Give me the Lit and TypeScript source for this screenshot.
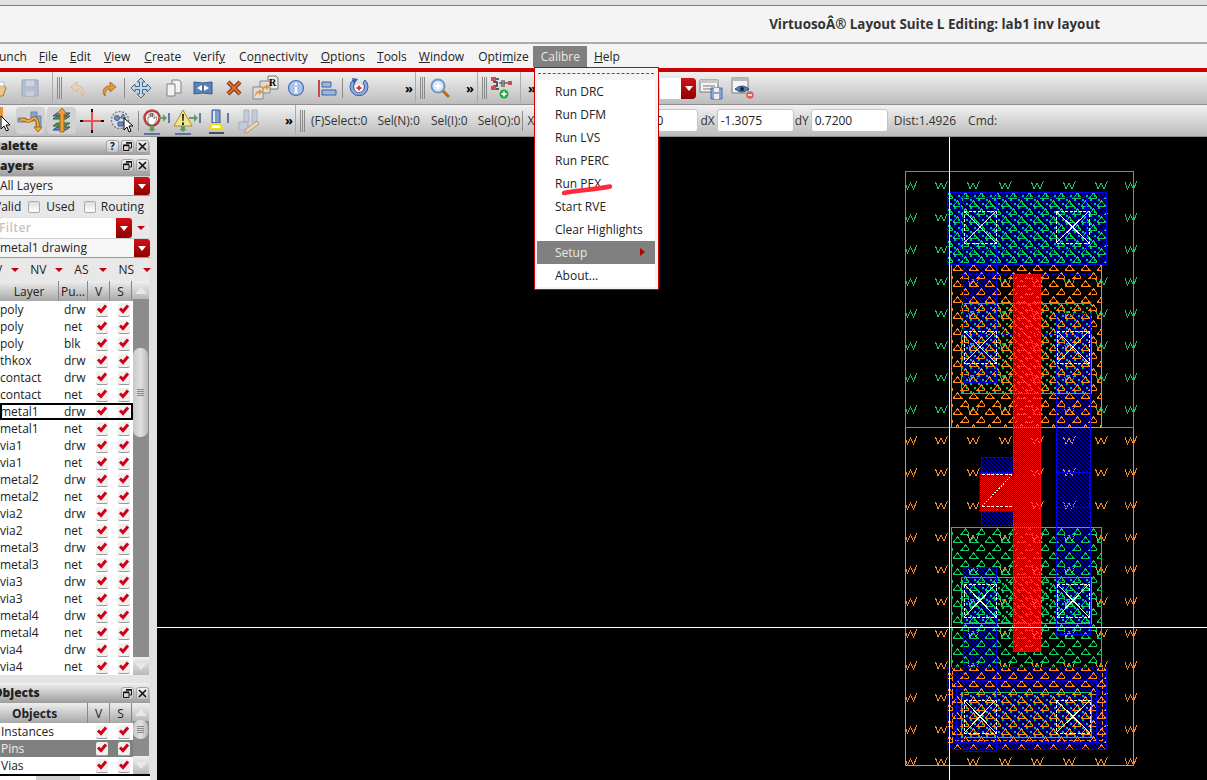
import { LitElement, html, css, svg } from "lit";
import { customElement } from "lit/decorators.js";

const ic = (c: unknown, w = 30) => html`<svg class="ic" width=${w} height="28" viewBox="0 0 ${w} 28">${c}</svg>`;
const folder = svg`<path d="M6 11h14l2 3-3 8H6z" fill="#e9c88a" stroke="#a07a3a"/><path d="M15 8l5 0 0 4-5 0z" fill="#fff" stroke="#bbb"/>`;
const save = svg`<path d="M7 6h16v16H7z" fill="#b5bfd4" stroke="#98a3b8"/><path d="M10 6h10v7H10z" fill="#cdd4e2" stroke="#a8b0c4"/><path d="M11 17h8v5h-8z" fill="#c8ccd4"/>`;
const undo = svg`<path d="M19 22c4-5 1-10-5-10V8l-6 5 6 5v-3c3 0 5 2 5 7z" fill="#ecd3b8" stroke="#d2b89c"/>`;
const redo = svg`<path d="M11 22c-4-5-1-10 5-10V8l6 5-6 5v-3c-3 0-5 2-5 7z" fill="#e8963e" stroke="#b06a28"/>`;
const move = svg`<path d="M15 4l4 4h-2.500v4.500H21V10l4 4-4 4v-2.500h-4.500V20H19l-4 4-4-4h2.500v-4.500H9V18l-4-4 4-4v2.500h4.500V8H11z" fill="#c4d8ec" stroke="#41678f"/>`;
const copy = svg`<path d="M15 6h7l2 2v11h-9z" fill="#f2f2f2" stroke="#808080"/><path d="M10 10h8v12h-8z" fill="#f2f2f2" stroke="#808080"/>`;
const stretch = svg`<path d="M6 8q9 2 18 0v12q-9-2-18 0z" fill="#5c83b8" stroke="#38598c"/><path d="M14 11l-5 3 5 3zM16 11l5 3-5 3z" fill="#fff"/><path d="M15 10v8" stroke="#38598c"/>`;
const del = svg`<path d="M9 8l12 12M21 8L9 20" stroke="#7a3410" stroke-width="4.200"/><path d="M9 8l12 12M21 8L9 20" stroke="#e0702c" stroke-width="2"/>`;
const rIcon = svg`<path d="M18 2h8l2 2v11h-10z" fill="#eee" stroke="#777"/><path d="M10 7h10v12h-10z" fill="#ddd" stroke="#888"/><path d="M3 13h10v12h-10z" fill="#ddd" stroke="#888"/><path d="M5 23c0-4 1-6 4-6v-2l4 3-4 3v-2c-2 0-3 2-4 4zM12 17c0-3 1-5 4-5v-2l4 3-4 3v-2c-2 0-3 1-4 3z" fill="#e8963e"/><text x="19" y="12" font-family="Liberation Serif" font-weight="700" font-size="10" fill="#000">R</text>`;
const info = svg`<circle cx="15" cy="14" r="7.500" fill="#a9c3ea" stroke="#4a6cb0" stroke-width="1.200"/><circle cx="15" cy="10" r="1.300" fill="#fff"/><path d="M13.500 12.500h2.500V18h1v1h-4v-1h1v-4.500h-.5z" fill="#fff"/>`;
const align = svg`<path d="M7 6v17" stroke="#c44848" stroke-width="2"/><path d="M10 8h9v5h-9zM10 16h14v5H10z" fill="#9cb6dc" stroke="#3a62a8"/>`;
const reload = svg`<path d="M9 6a9 9 0 1 0 12 0l-2 3a5.500 5.500 0 1 1-8 0z" fill="#8aa8dc" stroke="#3a5ea4"/><path d="M8 4l6 1-4 5z" fill="#3a5ea4"/><circle cx="15" cy="14" r="4" fill="#fff"/><path d="M15 11.500v5M12.500 14h5" stroke="#e03030" stroke-width="1.800"/>`;
const zoomI = svg`<path d="M16 16l7 7" stroke="#b86c1c" stroke-width="3"/><circle cx="12" cy="12" r="6.500" fill="#d8e8f8" stroke="#6f95c4" stroke-width="2"/><path d="M12 9v6M9 12h6" stroke="#fff" stroke-width="2"/>`;
const comp = svg`<path d="M11 5H6v3h3v4H6v3h5" fill="none" stroke="#333" stroke-width="1.500"/><path d="M11 9h3M14 6v7M16 6v7M16 9h5" fill="none" stroke="#333"/><path d="M3 3h5v4H3zM3 12h5v4H3zM20 7h4v4h-4z" fill="#c85050"/><circle cx="16" cy="20" r="4.500" fill="#1fa83c"/><path d="M16 17.500v5M13.500 20h5" stroke="#fff" stroke-width="1.800"/>`;
const winSave = svg`<path d="M4 6h18v12H4z" fill="#f4f4f4" stroke="#777"/><path d="M4 6h18v3H4z" fill="#c8c8c8"/><path d="M7 12h12M7 15h8" stroke="#777"/><path d="M15 14h11v11H15z" fill="#8aa4d8" stroke="#4a6aa4"/><path d="M18 14h5v4h-5zM18 20h5v5h-5z" fill="#eee"/>`;
const winEye = svg`<path d="M5 4h16v15H5z" fill="#f4f4f4" stroke="#777"/><path d="M5 4h16v3H5z" fill="#b8b8b8"/><path d="M8 15q7-6 14 0-7 6-14 0z" fill="#5c7cb0" stroke="#2c4a80"/><circle cx="15" cy="15" r="2" fill="#223"/><circle cx="23" cy="21" r="3.800" fill="#e06060"/><path d="M21 21h4" stroke="#fff" stroke-width="1.500"/>`;
const curPre = svg`<path d="M10 0h5v10h-5z" fill="#e8963e"/><path d="M13 9v13l3-3 2.500 5 2-1-2.500-5h4z" fill="#fff" stroke="#000"/>`;
const route = svg`<path d="M2 11h8v4H2zM15 5h6v9h-6zM20 9h5v11h-5z" fill="#88a4cc" stroke="#6484b0"/><path d="M4 14c4-5 7 3 11-1s6-1 7 4v3" fill="none" stroke="#a06814" stroke-width="3.600"/><path d="M4 14c4-5 7 3 11-1s6-1 7 4v3" fill="none" stroke="#f0b040" stroke-width="1.800"/><path d="M18 20h8l-4 5z" fill="#f0b040" stroke="#a06814"/>`;
const layers = svg`<path d="M6 12l4-3h13l-4 3zM6 19l4-3h13l-4 3z" fill="#4a9a50" stroke="#2a6a30"/><path d="M6 23l4-3h13l-4 3z" fill="#6484c0" stroke="#2a4a90"/><path d="M6 9l4-3h13l-4 3z" fill="#6484c0" stroke="#2a4a90"/><path d="M15 1l-5 6h3v18h4V7h3z" fill="#f0a030" stroke="#a06814"/>`;
const cross = svg`<path d="M15 3v22M4 14h22" stroke="#e85050" stroke-width="2"/><path d="M15 2v3M15 23v3M3 14h3M24 14h3" stroke="#111" stroke-width="2"/>`;
const selectI = svg`<circle cx="12" cy="13" r="8.500" fill="#ddd" stroke="#777" stroke-dasharray="2 1.500" stroke-width="1.300"/><circle cx="9" cy="11" r="2.500" fill="#6d8fc4" stroke="#3c5a90"/><path d="M15 7l2.500 4h-5z" fill="#8aa4cc" stroke="#3c5a90"/><path d="M10 15h5v4h-5z" fill="#6d8fc4" stroke="#3c5a90"/><path d="M16 11v12l3-3 2 5 2-1-2-5h4z" fill="#fff" stroke="#000"/>`;
const hand = svg`<circle cx="13" cy="11" r="7.500" fill="#f0f0f0" stroke="#b83c3c" stroke-width="2.500"/><path d="M9 10v5q1 3 4 3t4-4l1-4h-2l-1 2V7h-1.500v3V6H13v4V6h-1.500v4V7H10v4z" fill="#fff" stroke="#555" stroke-width=".6"/><path d="M20 10h4V7l4 4-4 4v-3h-4z" fill="#5da060"/><path d="M11 19h4v3h2l-4 3-4-3h2z" fill="#5da060"/><path d="M5 27h16" stroke="#3c5a90" stroke-width="1.500"/><path d="M30 6v10" stroke="#3c5a90" stroke-width="1.500"/>`;
const warnI = svg`<path d="M13 3l9 16H4z" fill="#f4e68c" stroke="#b09030"/><path d="M12 7h2l-.4 7h-1.200zM12 15.500h2V18h-2z" fill="#222"/><path d="M19 10h5V7l4 4-4 4v-3h-5z" fill="#5da060"/><path d="M11 19h4v3h2l-4 3-4-3h2z" fill="#5da060"/><path d="M5 27h16" stroke="#3c5a90" stroke-width="1.500"/><path d="M30 6v10" stroke="#3c5a90" stroke-width="1.500"/>`;
const yellowI = svg`<path d="M11 3h8v13h-8z" fill="#7c9cd0" stroke="#3c5a90"/><path d="M12 4h2v11h-2z" fill="#dfe8f6"/><path d="M11 17h8l2 5H9z" fill="#fff" stroke="#f0e000" stroke-width="2"/><path d="M8 26h15" stroke="#222244" stroke-width="1.500"/><path d="M27 6v10" stroke="#3c5a90" stroke-width="1.500"/>`;
const disI = svg`<path d="M6 15h9v8H6zM11 3h5v12h-5zM19 3h5v12h-5z" fill="#c4cbd8" stroke="#a8b0c0"/><path d="M11 26l2-4 11-8 2 3-11 8z" fill="#e8d8b8" stroke="#b09880"/>`;

const wbFloat = svg`<svg width="9" height="9" viewBox="0 0 9 9"><path d="M3 .5h5.500V6H6.500M.5 3H6v5.500H.5z" fill="none" stroke="#111"/><path d="M3 1h5.500M.5 3.500H6" stroke="#111" stroke-width="1.500"/></svg>`;
const wbClose = svg`<svg width="9" height="9" viewBox="0 0 9 9"><path d="M1 1l7 7M8 1l-7 7" stroke="#111" stroke-width="1.600"/></svg>`;

const rows: [string, string, boolean?][] = [
  ["poly", "drw"], ["poly", "net"], ["poly", "blk"], ["thkox", "drw"], ["contact", "drw"], ["contact", "net"],
  ["metal1", "drw", true], ["metal1", "net"], ["via1", "drw"], ["via1", "net"], ["metal2", "drw"], ["metal2", "net"],
  ["via2", "drw"], ["via2", "net"], ["metal3", "drw"], ["metal3", "net"], ["via3", "drw"], ["via3", "net"],
  ["metal4", "drw"], ["metal4", "net"], ["via4", "drw"], ["via4", "net"],
];
const check = html`<span class="cb"><svg width="12" height="12" viewBox="0 0 12 12"><path d="M2 5.500l3 3 5-6" fill="none" stroke="#d00018" stroke-width="3"/></svg></span>`;
const arrow = html`<span class="carr"></span>`;

const menuItems = ["Run DRC", "Run DFM", "Run LVS", "Run PERC", "Run PEX", "Start RVE", "Clear Highlights", "Setup", "About..."];

const wx = [911, 941.5, 973.5, 1005.5, 1037.5, 1069.5, 1101.5, 1131];
const wyGreen = [185, 217, 249, 281, 313, 345, 377, 409];
const wyOrange = [440, 472, 505, 537, 569, 601, 633, 665, 697, 729, 761];
const wMark = (x: number, y: number, c: string) =>
  svg`<path d="M${x - 6} ${y - 3}l2.500 7 3-6 3 6 3.500-8" fill="none" stroke=${c}/>`;
const cutX = (x: number, y: number, w: number, h: number) => svg`
  <rect x=${x} y=${y} width=${w} height=${h} fill="none" stroke="#fff" stroke-dasharray="3 1.500"/>
  <path d="M${x} ${y}L${x + w} ${y + h}M${x + w} ${y}L${x} ${y + h}" stroke="#fff"/>`;
const hatch = (x: number, y: number, w: number, h: number) =>
  svg`<rect x=${x} y=${y} width=${w} height=${h} fill="url(#bh)"/>`;
const thin = (x: number, y: number, w: number, h: number, c: string, extra = "") =>
  svg`<rect x=${x} y=${y} width=${w} height=${h} fill="none" stroke=${c} stroke-dasharray=${extra || "none"}/>`;

interface MenuEntry { pre: string; key: string; post: string; shift: number; }
const mb: MenuEntry[] = [
  { pre: "L", key: "a", post: "unch", shift: 0 },
  { pre: "", key: "F", post: "ile", shift: 0 },
  { pre: "", key: "E", post: "dit", shift: 0 },
  { pre: "", key: "V", post: "iew", shift: 1 },
  { pre: "", key: "C", post: "reate", shift: 2 },
  { pre: "Verif", key: "y", post: "", shift: 0 },
  { pre: "Co", key: "n", post: "nectivity", shift: 2 },
  { pre: "", key: "O", post: "ptions", shift: 1 },
  { pre: "", key: "T", post: "ools", shift: 0 },
  { pre: "", key: "W", post: "indow", shift: 0 },
  { pre: "Opti", key: "m", post: "ize", shift: 2 },
];

@customElement("app-root")
export class AppRoot extends LitElement {
  static styles = css`
    :host { display: block; width: 1207px; height: 780px; overflow: hidden; position: relative; font-family: "Open Sans", "Noto Sans", sans-serif; font-size: 12px; color: #222; background: #e4e4e4; }
    .app { display: flex; flex-direction: column; height: 780px; }
    .strip { height: 5px; background: #e2e2e2; border-bottom: 1px solid #7c7c7c; }
    .title { height: 36px; display: flex; align-items: center; justify-content: flex-end; padding-right: 107px; background: #f4f4f4; font-size: 13.4px; font-weight: 700; color: #333; border-bottom: 2px solid #aaa; }
    .menubar { height: 24px; background: #f4f4f4; display: flex; align-items: center; margin-left: -20px; }
    .m { padding: 0 6px; height: 21px; line-height: 21px; margin-top: 0; white-space: nowrap; flex: none; }
    .m.on { background: #808080; color: #e8e8e8; padding: 0 7px 0 8px; margin-left: -2px; }
    .m.help { margin-left: 1px; }
    .redline { height: 4px; background: #cc0000; }
    .tb { display: flex; background: linear-gradient(#f1f1f1, #bcbcbc); border-bottom: 1px solid #8f8f8f; align-items: stretch; }
    .tb1 { height: 32px; }
    .tb2 { height: 31px; }
    .seg { display: flex; align-items: center; border-right: 1px solid #aaa; border-bottom-right-radius: 3px; flex: none; }
    .seg1 { margin-left: -17px; }
    .seg2 { width: 353px; }
    .seg3 { width: 52px; }
    .seg4 { width: 33px; }
    .seg5 { margin-left: -11px; width: 306px; }
    .pad7 { width: 7px; flex: none; }
    .slot { width: 31px; flex: none; display: flex; justify-content: center; overflow: visible; }
    .slot.narrow { width: 27px; }
    .slot.l { justify-content: flex-start; }
    .ic { display: block; flex: none; overflow: visible; }
    .handle { width: 5px; height: 22px; flex: none; box-sizing: border-box; border-left: 1px solid #8a8a8a; border-right: 1px solid #8a8a8a; margin: 5px 0 0 4px; position: relative; }
    .handle::after { content: ""; position: absolute; left: 1px; top: 0; width: 1px; height: 22px; background: #8a8a8a; }
    .sep { width: 1px; height: 20px; background: #8a8a8a; flex: none; }
    .chev { font-weight: 700; color: #000; font-size: 13px; flex: none; line-height: 1; align-self: center; }
    .c1 { margin-left: 31px; }
    .c2 { margin-left: 10px; }
    .c3 { margin-left: 7px; }
    .c4 { margin-left: 22px; }
    .sp { flex: none; width: 124px; }
    .active { background: #d2d2d2; border-radius: 4px; width: 29px; height: 27px; display: flex; justify-content: center; align-items: center; flex: none; }
    .active + .active { margin-left: 2px; }
    .stat { white-space: nowrap; flex: none; color: #333; }
    .stats { display: flex; align-items: center; flex: 1; margin-left: 6px; }
    .ml1 { margin-left: 10px; } .ml2 { margin-left: 11px; } .ml3 { margin-left: 10px; } .ml4 { margin-left: 2px; } .ml5 { margin-left: 4px; }
    .ml1b { margin-left: 2px; } .ml0 { margin-left: 1px; } .ml6 { margin-left: 6px; } .ml7 { margin-left: 12px; }
    .field { background: #fff; border: 1px solid #c4c4c4; border-radius: 3px; height: 23px; line-height: 21px; padding-left: 3px; box-sizing: border-box; flex: none; color: #222; }
    .field.w { width: 77px; }
    .field.x { margin-left: 94px; width: 70px; text-align: right; padding-right: 34px; }
    .combo { width: 36px; height: 21px; display: flex; flex: none; border-radius: 0 3px 3px 0; overflow: hidden; background: #fff; align-self: center; }
    .carrbox { width: 15px; margin-left: auto; background: linear-gradient(#d21018, #8c0000); display: flex; align-items: center; justify-content: center; border-radius: 0 3px 3px 0; flex: none; }
    .carr { display: block; width: 0; height: 0; border-left: 4px solid transparent; border-right: 4px solid transparent; border-top: 5px solid #fff; }
    .wins { display: flex; align-items: center; flex: none; gap: 1px; }
    .main { flex: 1; display: flex; min-height: 0; }
    .dock { width: 157px; flex: none; background: #e2e2e2; overflow: hidden; }
    .dtitle { height: 20px; display: flex; align-items: center; background: linear-gradient(#f2f2f2, #9c9c9c); font-weight: 700; width: 150px; box-sizing: border-box; }
    .dtitle.a { height: 18px; }
    .dtitle.b { height: 21px; }
    .dtitle b { flex: 1; white-space: nowrap; margin-left: -7px; line-height: 16px; }
    .wb { width: 13px; height: 13px; box-sizing: border-box; border: 1px solid #a4a4a4; border-radius: 3px; margin-right: 2px; background: linear-gradient(#f2f2f2, #c4c4c4); display: flex; align-items: center; justify-content: center; font-size: 10px; font-weight: 700; line-height: 1; flex: none; color: #111; }
    .wb:last-child { margin-right: 1px; }
    .dcombo { width: 150px; height: 20px; display: flex; background: #f6f6f6; border-top: 1px solid #d0d0d0; box-sizing: border-box; line-height: 18px; border-bottom: 1px solid #9a9a9a; }
    .dcombo > span:first-child { flex: 1; }
    .dcombo .carrbox { width: 16px; }
    .drow { width: 150px; height: 21px; display: flex; align-items: center; white-space: nowrap; background: #e8e8e8; }
    .box { width: 12px; height: 12px; box-sizing: border-box; background: linear-gradient(#ddd,#fff); border: 1px solid #aaa; border-radius: 2px; flex: none; }
    .d1 { margin-left: -6px; } .d2 { margin-left: 7px; } .d3 { margin-left: 6px; } .d4 { margin-left: 9px; } .d5 { margin-left: 5px; }
    .filter { width: 150px; height: 20px; display: flex; align-items: center; margin-top: 1px; background: #e8e8e8; }
    .finput { width: 132px; height: 20px; background: #fff; color: #c4c4c4; line-height: 19px; font-weight: 600; flex: none; border-radius: 3px; overflow: hidden; }
    .finput span { margin-left: -1px; display: block; letter-spacing: .4px; }
    .filter .carrbox { height: 20px; width: 16px; margin-left: -16px; }
    .ftri, .stri { width: 0; height: 0; border-left: 4px solid transparent; border-right: 4px solid transparent; border-top: 4px solid #c00010; display: block; flex: none; }
    .ftri { margin-left: 5px; }
    .vis { width: 150px; height: 23px; display: flex; align-items: center; background: #e8e8e8; white-space: nowrap; }
    .v0 { margin-left: -5px; } .v1 { margin-left: 9px; } .v2 { margin-left: 11px; } .v3 { margin-left: 10px; } .v4 { margin-left: 12px; }
    .tbl { width: 150px; display: flex; }
    .cols { width: 133px; flex: none; }
    .hd { display: grid; grid-template-columns: 59px 29px 22px 22px 1px; height: 20px; background: linear-gradient(#eee, #a8a8a8); line-height: 22px; text-align: center; }
    .hd.o { grid-template-columns: 88px 22px 22px 1px; }
    .hd span { border-right: 1px solid #888; white-space: nowrap; overflow: hidden; }
    .hd .bold { font-weight: 700; padding-right: 18px; }
    .r { height: 17px; display: flex; align-items: center; background: #fff; position: relative; box-sizing: border-box; line-height: 17px; }
    .r .n { width: 64px; flex: none; white-space: nowrap; }
    .r .n.w { width: 96px; padding-left: 1px; box-sizing: border-box; }
    .r .p { width: 32px; flex: none; }
    .r.sel { outline: 2px solid #000; outline-offset: -2px; }
    .r.hi { background: #808080; color: #eee; }
    .cb { width: 12px; height: 13px; background: #f0f0f0; border-bottom: 1px solid #999; flex: none; margin-right: 10px; display: block; border-radius: 2px; }
    .cb svg { display: block; }
    .sb { width: 16px; background: #8c8c8c; flex: none; display: flex; flex-direction: column; justify-content: space-between; position: relative; }
    .sbtn { height: 18px; background: linear-gradient(#f0f0f0,#b8b8b8); display: flex; align-items: center; justify-content: center; flex: none; }
    .up { width: 0; height: 0; border-left: 6px solid transparent; border-right: 6px solid transparent; border-bottom: 7px solid #e8e8e8; }
    .dn { width: 0; height: 0; border-left: 6px solid transparent; border-right: 6px solid transparent; border-top: 7px solid #e8e8e8; }
    .thumb { position: absolute; left: 0; width: 15px; background: linear-gradient(90deg, #c8c8c8, #e0e0e0, #b8b8b8); border-radius: 7px; display: flex; align-items: center; justify-content: center; }
    .thumb.t1 { top: 67px; height: 89px; }
    .thumb.t2 { top: 17px; height: 19px; }
    .thumb i { display: block; width: 7px; height: 8px; background: repeating-linear-gradient(#888 0 1px, transparent 1px 2px); }
    .gap { height: 8px; background: #e4e4e4; width: 150px; }
    .tabs { height: 7px; width: 150px; border-top: 2px solid #000; background: #fff; box-sizing: border-box; display: flex; }
    .tabs i { display: block; width: 44px; margin-left: 36px; background: #cfcfcf; }
    .canvas { flex: 1; background: #000; min-width: 0; }
    .canvas svg { display: block; }
    .menu { position: absolute; left: 534px; top: 67px; width: 125px; height: 223px; box-sizing: border-box; border: 1px solid #cc0000; background: #f4f4f4; padding: 0 3px 0 2px; }
    .tear { height: 6px; margin: 0 1px 6px; border-bottom: 1px dashed #555; box-sizing: border-box; }
    .mi { height: 23px; line-height: 23px; padding-left: 18px; position: relative; color: #222; white-space: nowrap; background: #fff; }
    .mi.on { background: #808080; color: #e6e6e6; }
    .mi.on::after { content: ""; position: absolute; right: 10px; top: 7px; border-left: 5px solid #b00000; border-top: 4px solid transparent; border-bottom: 4px solid transparent; }
    .scribble { position: absolute; left: 555px; top: 178px; pointer-events: none; }
  `;

  private tb1() {
    const group1 = [move, copy, stretch, del, rIcon, info, align];
    return html`<div class="tb tb1">
      <div class="seg seg1"><div class="slot">${ic(folder)}</div><div class="slot">${ic(save)}</div><span class="pad7"></span></div>
      <span class="handle"></span>
      <div class="seg seg2">
        <div class="slot">${ic(undo)}</div><div class="slot">${ic(redo)}</div><span class="sep"></span>
        ${group1.map((g) => html`<div class="slot">${ic(g)}</div>`)}
        <span class="sep"></span><div class="slot">${ic(reload)}</div>
        <span class="chev c1">»</span>
      </div>
      <span class="handle"></span>
      <div class="seg seg3"><div class="slot">${ic(zoomI)}</div><span class="chev c2">»</span></div>
      <span class="handle"></span>
      <div class="seg seg4"><div class="slot">${ic(comp)}</div></div>
      <span class="chev c3">»</span>
      <span class="sp"></span>
      <div class="combo"><span class="carrbox">${arrow}</span></div>
      <div class="wins">${ic(winSave)}${ic(winEye)}</div>
    </div>`;
  }

  private tb2() {
    return html`<div class="tb tb2">
      <div class="seg seg5">
        <div class="slot narrow">${ic(curPre)}</div>
        <div class="active">${ic(route)}</div>
        <div class="active">${ic(layers)}</div>
        <div class="slot">${ic(cross)}</div>
        <div class="slot">${ic(selectI)}</div>
        <span class="sep"></span>
        <div class="slot l">${ic(hand, 34)}</div>
        <div class="slot l">${ic(warnI, 34)}</div>
        <div class="slot l">${ic(yellowI)}</div>
        <div class="slot">${ic(disI)}</div>
        <span class="chev c4">»</span>
      </div>
      <span class="handle"></span>
      <div class="stats">
        <span class="stat">(F)Select:0</span>
        <span class="stat ml1">Sel(N):0</span>
        <span class="stat ml2">Sel(I):0</span>
        <span class="stat ml3">Sel(O):0</span>
        <span class="sep ml4"></span>
        <span class="stat ml5">X</span>
        <span class="field x">0</span>
        <span class="stat ml1b">dX</span>
        <span class="field w ml1b">-1.3075</span>
        <span class="stat ml0">dY</span>
        <span class="field w ml1b">0.7200</span>
        <span class="stat ml6">Dist:1.4926</span>
        <span class="stat ml7">Cmd:</span>
      </div>
    </div>`;
  }

  private dock() {
    return html`<div class="dock">
      <div class="dtitle a"><b>Palette</b><span class="wb">?</span><span class="wb">${wbFloat}</span><span class="wb">${wbClose}</span></div>
      <div class="dtitle b"><b>Layers</b><span class="wb">${wbFloat}</span><span class="wb">${wbClose}</span></div>
      <div class="dcombo"><span>All Layers</span><span class="carrbox">${arrow}</span></div>
      <div class="drow"><span class="d1">Valid</span><span class="box d2"></span><span class="d3">Used</span><span class="box d4"></span><span class="d5">Routing</span></div>
      <div class="filter"><div class="finput"><span>Filter</span></div><span class="carrbox">${arrow}</span><span class="ftri"></span></div>
      <div class="dcombo"><span>metal1 drawing</span><span class="carrbox">${arrow}</span></div>
      <div class="vis">
        <span class="v0">V</span><span class="stri v1"></span>
        <span class="v2">NV</span><span class="stri v1"></span>
        <span class="v2">AS</span><span class="stri v3"></span>
        <span class="v4">NS</span><span class="stri v1"></span>
      </div>
      <div class="tbl">
        <div class="cols">
          <div class="hd"><span>Layer</span><span>Pu...</span><span>V</span><span>S</span></div>
          ${rows.map((r) => html`<div class="r ${r[2] ? "sel" : ""}"><span class="n">${r[0]}</span><span class="p">${r[1]}</span>${check}${check}</div>`)}
        </div>
        <div class="sb"><div class="sbtn"><span class="up"></span></div><div class="thumb t1"><i></i></div><div class="sbtn"><span class="dn"></span></div></div>
      </div>
      <div class="gap"></div>
      <div class="dtitle"><b>Objects</b><span class="wb">${wbFloat}</span><span class="wb">${wbClose}</span></div>
      <div class="tbl">
        <div class="cols">
          <div class="hd o"><span class="bold">Objects</span><span>V</span><span>S</span></div>
          <div class="r"><span class="n w">Instances</span>${check}${check}</div>
          <div class="r hi"><span class="n w">Pins</span>${check}${check}</div>
          <div class="r"><span class="n w">Vias</span>${check}${check}</div>
        </div>
        <div class="sb"><div class="sbtn"><span class="up"></span></div><div class="thumb t2"><i></i></div><div class="sbtn"><span class="dn"></span></div></div>
      </div>
      <div class="tabs"><i></i></div>
    </div>`;
  }

  private layout() {
    return svg`
      <defs>
        <pattern id="bh" width="4" height="4" patternUnits="userSpaceOnUse"><path d="M0 0h1v1H0zM1 1h1v1H1zM2 2h1v1H2zM3 3h1v1H3z" fill="#0000d0"/></pattern>
        <pattern id="rc" width="2" height="2" patternUnits="userSpaceOnUse"><rect width="1" height="1" fill="#ff0000"/><rect x="1" y="1" width="1" height="1" fill="#ff0000"/></pattern>
        <pattern id="to" width="16" height="16" x="969" y="264" patternUnits="userSpaceOnUse"><path d="M4.500 1L.5 6h8zM12.500 9l-4 5h8z" fill="none" stroke="#ff8a1c"/></pattern>
        <pattern id="tg" width="16" height="16" x="969" y="264" patternUnits="userSpaceOnUse"><path d="M4.500 1L.5 6h8zM12.500 9l-4 5h8z" fill="none" stroke="#14c864"/></pattern>
        <pattern id="dg" width="8" height="8" x="962" y="303" patternUnits="userSpaceOnUse"><rect width="2" height="2" fill="#00c864"/><rect x="4" y="4" width="2" height="2" fill="#00c864"/></pattern>
      </defs>
      ${wx.flatMap((x) => wyGreen.map((y) => wMark(x, y, "#14c864")))}
      ${wx.flatMap((x) => wyOrange.map((y) => wMark(x, y, "#ff8a1c")))}
      <rect x="947" y="192" width="159" height="72" fill="#000"/>
      <rect x="981" y="457" width="32" height="68" fill="#000"/>
      <rect x="947" y="667" width="159" height="82" fill="#000"/>
      ${hatch(947, 192, 159, 72)}
      ${hatch(963, 192, 33.5, 190)}
      ${hatch(1056, 313, 34, 321)}
      ${hatch(981, 457, 32, 68)}
      ${hatch(963, 567, 33.5, 184)}
      ${hatch(947, 667, 159, 82)}
      <path d="M905.500 427.500V171.500H1133.500V427.500H905.500z" fill="none" stroke="#14c864"/>
      <path d="M905.500 428V765.500H1133.500V428" fill="none" stroke="#ff8a1c"/>
      <path d="M949.500 427.500H951.500" stroke="#ff8a1c"/>
      <rect x="951.500" y="264" width="150" height="163.500" fill="url(#to)" stroke="#ff8a1c"/>
      <rect x="951.500" y="527" width="150" height="140" fill="url(#tg)" stroke="#14c864"/>
      <rect x="947" y="192" width="159" height="72" fill="url(#tg)"/>
      <rect x="950" y="194" width="152" height="68" fill="url(#dg)"/>
      <rect x="961.500" y="303" width="130" height="90" fill="url(#dg)" stroke="#14c864"/>
      <rect x="961.500" y="577" width="130" height="46" fill="url(#dg)" stroke="#14c864"/>
      <rect x="947" y="667" width="159" height="82" fill="url(#to)"/>
      <rect x="961.500" y="692" width="130" height="45" fill="url(#dg)" stroke="#14c864"/>
      ${thin(952, 667, 150, 73, "#ff8a1c", "4 2")}
      ${thin(947, 192, 159, 72, "#0000f0")}
      ${thin(960, 197, 126, 52, "#0000f0")}
      ${thin(963, 192, 33.5, 190, "#0000f0")}
      ${thin(1056, 313, 34, 321, "#0000f0")}
      ${thin(1056, 472, 33, 35, "#0000f0")}
      ${thin(961.5, 274, 130, 60, "#0000f0", "4 2")}
      ${thin(981, 457, 32, 68, "#0000f0")}
      ${thin(963, 567, 33.5, 184, "#0000f0")}
      ${thin(947, 667, 159, 82, "#0000f0")}
      ${thin(956.5, 680, 140, 62.5, "#0000f0")}
      <rect x="1013" y="274" width="27" height="377" fill="url(#rc)" stroke="#ff0000"/>
      <rect x="979" y="472" width="34" height="39" fill="url(#rc)" stroke="#0000f0"/>
      <path d="M982 474.500h31M982 506.500h31" stroke="#fff" stroke-dasharray="3 1.500"/>
      <path d="M982 506l31-32" stroke="#fff" stroke-dasharray="1.500 1.500"/>
      ${cutX(964, 211, 32, 32)}${cutX(1056, 211, 33, 32)}
      ${cutX(964, 331, 32, 32)}${cutX(1057, 331, 32, 32)}
      ${cutX(964, 584, 32, 33)}${cutX(1057, 584, 32, 33)}
      ${cutX(964, 700, 32, 33)}${cutX(1056, 700, 34, 33)}
      <path d="M949.500 137V780M157 627.500H1207" stroke="#fff"/>
    `;
  }

  render() {
    return html`<div class="app">
      <div class="strip"></div>
      <div class="title">VirtuosoÂ® Layout Suite L Editing: lab1 inv layout</div>
      <div class="menubar">
        ${mb.map((m) => html`<span class="m" style="margin-left:${m.shift}px">${m.pre}<u>${m.key}</u>${m.post}</span>`)}
        <span class="m on">Calibre</span>
        <span class="m help"><u>H</u>elp</span>
      </div>
      <div class="redline"></div>
      ${this.tb1()}
      ${this.tb2()}
      <div class="main">
        ${this.dock()}
        <div class="canvas"><svg width="1050" height="643" viewBox="157 137 1050 643" shape-rendering="crispEdges">${this.layout()}</svg></div>
      </div>
    </div>
    <div class="menu">
      <div class="tear"></div>
      ${menuItems.map((m) => html`<div class="mi ${m === "Setup" ? "on" : ""}">${m}</div>`)}
    </div>
    <svg class="scribble" width="60" height="20" viewBox="555 178 60 20"><path d="M564 193c14-3 28-3 46-6.500" fill="none" stroke="#ff2a3a" stroke-width="4.500" stroke-linecap="round"/></svg>`;
  }
}
